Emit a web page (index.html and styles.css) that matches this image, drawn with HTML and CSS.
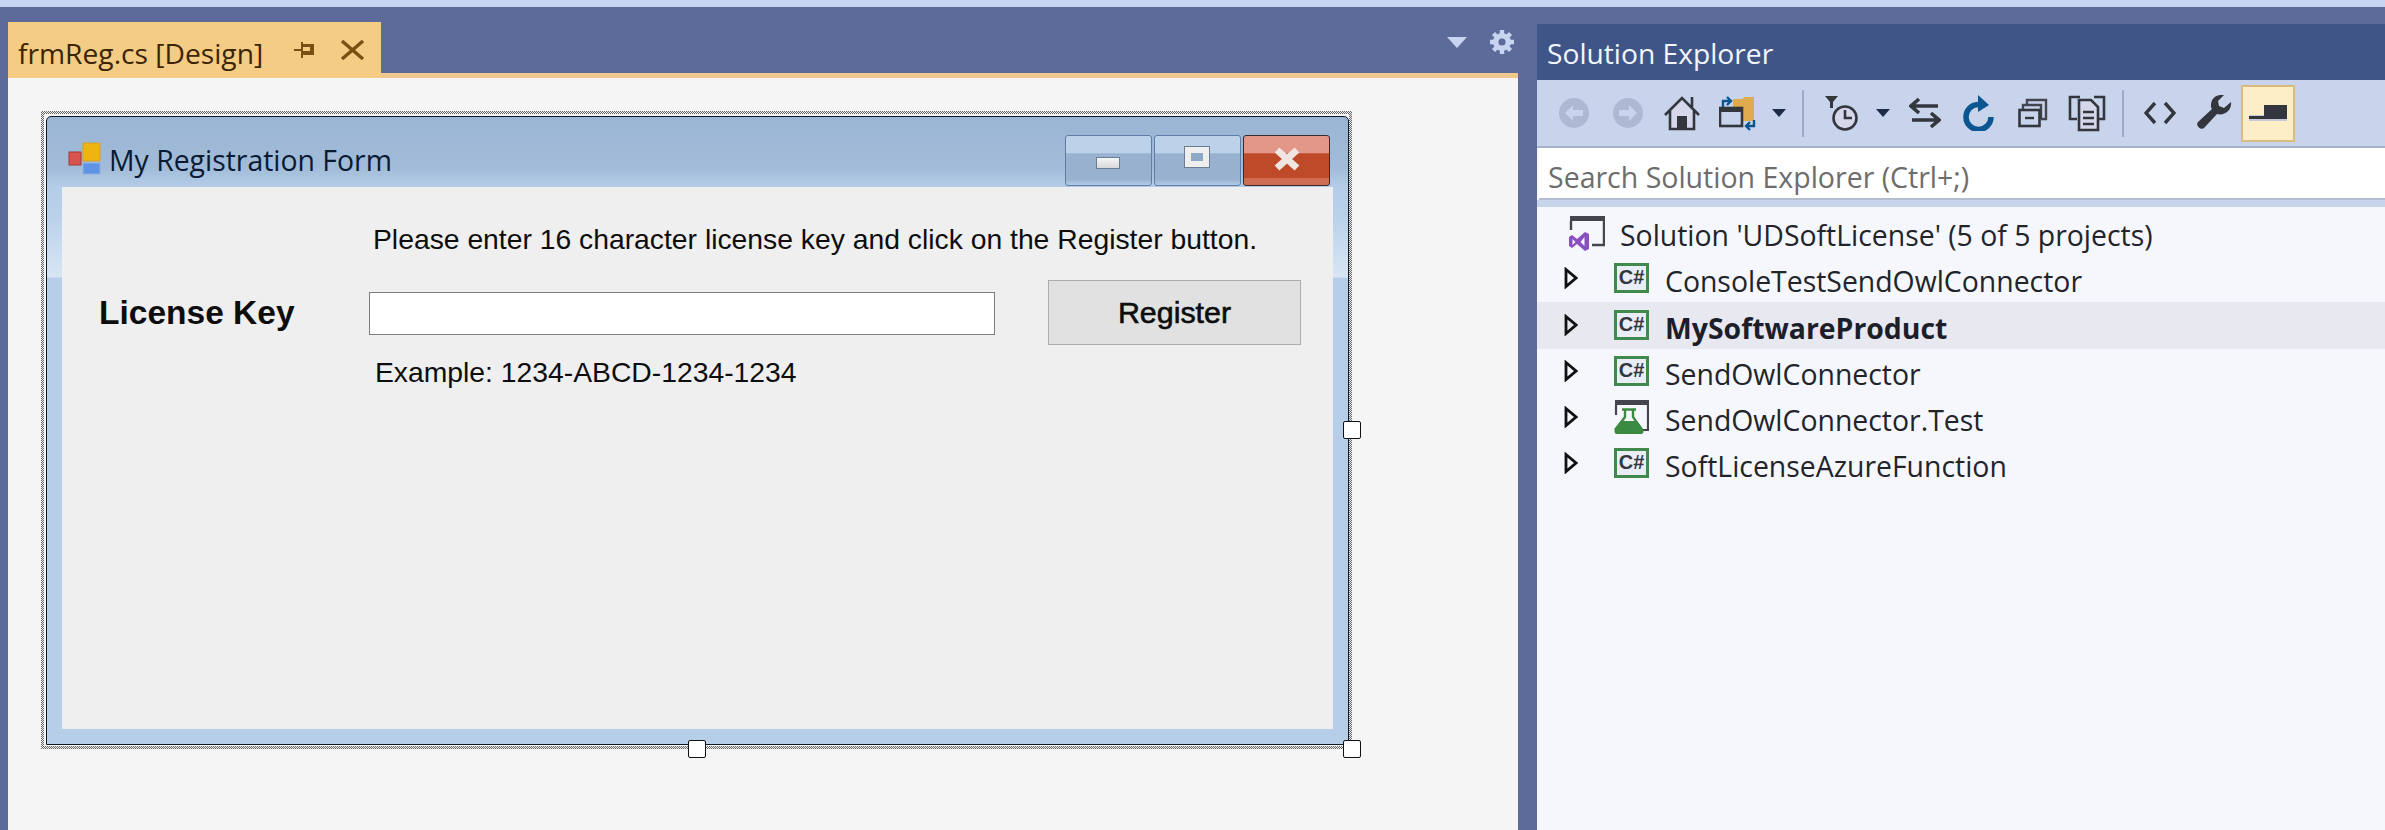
FILE: index.html
```html
<!DOCTYPE html>
<html lang="en">
<head>
<meta charset="utf-8">
<title>frmReg.cs [Design]</title>
<link rel="stylesheet" href="styles.css">
</head>
<body>
<div class="topbar"></div>
<div class="main">
  <section class="well">
    <div class="tabstrip">
      <div class="tab">
        <span class="tab-title">frmReg.cs [Design]</span>
        <svg class="tab-pin" width="20" height="18" viewBox="0 0 20 18"><path d="M0 9h8M8 1v16" stroke="#7a4f14" stroke-width="2" fill="none"/><rect x="9" y="3" width="11" height="11" fill="#7a4f14"/><rect x="9" y="6" width="7" height="4" fill="#f5cc84"/></svg>
        <svg class="tab-close" width="26" height="20" viewBox="0 0 26 20"><path d="M2 1l21 18M23 1L2 19" stroke="#7a4f14" stroke-width="3.4" fill="none"/></svg>
      </div>
      <div class="strip-tools">
        <svg width="20" height="11" viewBox="0 0 20 11"><path d="M0 0h20L10 11z" fill="#c8d4f0"/></svg>
        <svg class="gear" width="26" height="26" viewBox="0 0 26 26"><circle cx="13" cy="13" r="6.5" fill="none" stroke="#c8d4f0" stroke-width="5"/><path d="M13 1v24M1 13h24M4.5 4.5l17 17M21.5 4.5l-17 17" stroke="#c8d4f0" stroke-width="4.4"/><circle cx="13" cy="13" r="3.6" fill="#5c6b9a"/></svg>
      </div>
    </div>
    <div class="design">
      <div class="selection">
        <div class="form">
          <div class="titlebar">
            <svg class="app-icon" width="33" height="34" viewBox="0 0 33 34"><rect x="1" y="11" width="12" height="13" fill="#d8544e" stroke="#a33a36"/><rect x="15" y="2" width="17" height="18" fill="#edb412" stroke="#d2a22a"/><rect x="15" y="22" width="17" height="11" fill="#5f93e6" stroke="#8fb1e4"/></svg>
            <span class="form-title">My Registration Form</span>
            <div class="winbtns">
              <div class="winbtn"><span class="glyph-min"></span></div>
              <div class="winbtn"><span class="glyph-max"></span></div>
              <div class="winbtn winbtn-close"><svg width="28" height="24" viewBox="0 0 28 24"><path d="M4 3l20 18M24 3L4 21" stroke="#efe6e3" stroke-width="7" fill="none"/></svg></div>
            </div>
          </div>
          <div class="client">
            <p class="hint">Please enter 16 character license key and click on the Register button.</p>
            <div class="key-row">
              <label class="key-label">License Key</label>
              <div class="key-input"></div>
              <div class="reg-btn">Register</div>
            </div>
            <p class="example">Example: 1234-ABCD-1234-1234</p>
          </div>
        </div>
        <span class="handle handle-r"></span>
        <span class="handle handle-b"></span>
        <span class="handle handle-br"></span>
      </div>
    </div>
  </section>
  <aside class="explorer">
    <header class="se-title">Solution Explorer</header>
    <div class="toolbar">
      <span class="tb"><svg width="32" height="32" viewBox="0 0 32 32"><circle cx="16" cy="16" r="15" fill="#aeb8d2"/><path d="M15 8l-8 8 8 8v-5h10v-6H15z" fill="#c8d4ec"/></svg></span>
      <span class="tb"><svg width="32" height="32" viewBox="0 0 32 32"><circle cx="16" cy="16" r="15" fill="#aeb8d2"/><path d="M17 8l8 8-8 8v-5H7v-6h10z" fill="#c8d4ec"/></svg></span>
      <span class="tb"><svg width="36" height="36" viewBox="0 0 36 36"><path d="M6 17v17h24V17L18 5z" fill="#d5d8ea"/><path d="M6 16v18h24V16M1 20L18 3l17 17M28 12V2" fill="none" stroke="#33363d" stroke-width="2.6"/><rect x="13" y="21" width="10" height="13" fill="#33363d"/></svg></span>
      <span class="tb tb-sync"><svg width="38" height="36" viewBox="0 0 38 36"><path d="M14 4h9l3-2h9v24H22V12H14z" fill="#e0aa4e"/><rect x="1" y="13" width="22" height="18" fill="#c8d4ec" stroke="#33363d" stroke-width="2.6"/><rect x="1" y="13" width="22" height="4" fill="#33363d"/><path d="M4 12V6h7M8 2l4 4-4 4M35 25v6h-7M31 27l-4 4 4 4" fill="none" stroke="#0b5590" stroke-width="2.4"/></svg></span>
      <span class="caret"></span>
      <span class="tb-sep"></span>
      <span class="tb"><svg width="36" height="38" viewBox="0 0 36 38"><path d="M0 2h13L8 8v6H5V8z" fill="#33363d"/><circle cx="20" cy="24" r="11.5" fill="#d5d8ea" stroke="#33363d" stroke-width="2.6"/><path d="M20 16v8h7" fill="none" stroke="#33363d" stroke-width="2.6"/></svg></span>
      <span class="caret caret-b"></span>
      <span class="tb"><svg width="32" height="32" viewBox="0 0 32 32"><path d="M10 2L2 9l8 7M3 9h26M22 16l8 7-8 7M29 23H3" fill="none" stroke="#33363d" stroke-width="3.6"/></svg></span>
      <span class="tb"><svg width="32" height="36" viewBox="0 0 32 36"><path d="M15 9.500A12.500 12.500 0 1 0 28 22" fill="none" stroke="#0b5590" stroke-width="5.500"/><path d="M15 0l11 10-11 7z" fill="#0b5590"/></svg></span>
      <span class="tb"><svg width="30" height="30" viewBox="0 0 30 30"><path d="M9 7V2h19v19h-5M5 12V7h18v14" fill="none" stroke="#43464e" stroke-width="2.400"/><rect x="1.500" y="12" width="20" height="16" fill="#c8d4ec" stroke="#33363d" stroke-width="2.600"/><path d="M7 20h9" stroke="#33363d" stroke-width="2.400"/></svg></span>
      <span class="tb"><svg width="38" height="37" viewBox="0 0 38 37"><path d="M9 24H2V2h10M26 2h10v22h-5" fill="none" stroke="#33363d" stroke-width="2.600"/><path d="M11 5h12l7 7v23H11z" fill="#d5d8ea" stroke="#33363d" stroke-width="2.600"/><path d="M15 17h11M15 23h11M15 29h11" stroke="#33363d" stroke-width="2.400"/></svg></span>
      <span class="tb-sep tb-sep-b"></span>
      <span class="tb"><svg width="32" height="24" viewBox="0 0 32 24"><path d="M11 2L2 12l9 10M21 2l9 10-9 10" fill="none" stroke="#33363d" stroke-width="3.400"/></svg></span>
      <span class="tb"><svg width="36" height="36" viewBox="0 0 36 36"><path d="M35 7l-7 6-5-2-1-5 6-6c-7-1-13 3-13 10 0 2 0 3 1 4L2 27c-3 3 3 9 6 6l13-14c8 2 15-4 14-12z" fill="#33363d"/></svg></span>
      <span class="tb tb-active"><svg width="38" height="16" viewBox="0 0 38 16"><rect y="10" width="38" height="6" fill="#c5c9d8"/><rect x="0" y="11" width="16" height="3" fill="#33363d"/><rect x="15" y="0" width="23" height="14" fill="#33363d"/></svg></span>
    </div>
    <div class="search">Search Solution Explorer (Ctrl+;)</div>
    <div class="search-gap"></div>
    <ul class="tree">
      <li class="row row-solution">
        <svg class="sol-icon" width="36" height="36" viewBox="0 0 36 36"><rect x="1" y="1" width="35" height="5" fill="#43464e"/><path d="M2 6v9M35 6v24H23" fill="none" stroke="#43464e" stroke-width="2.400"/><path d="M0 22l3-2 5 4 8-7 4 2v15l-4 2-8-7-5 4-3-2z" fill="#8a4fc0"/><path d="M3.500 24v6l3-3zM15.500 22l-4 5 4 4z" fill="#f5f7fc"/></svg>
        <span class="label">Solution 'UDSoftLicense' (5 of 5 projects)</span>
      </li>
      <li class="row"><svg class="expander" width="14" height="22" viewBox="0 0 14 22"><path d="M2 2.500L12 11 2 19.500z" fill="none" stroke="#111" stroke-width="2.800"/></svg><span class="cs">C#</span><span class="label">ConsoleTestSendOwlConnector</span></li>
      <li class="row row-selected"><svg class="expander" width="14" height="22" viewBox="0 0 14 22"><path d="M2 2.500L12 11 2 19.500z" fill="none" stroke="#111" stroke-width="2.800"/></svg><span class="cs">C#</span><span class="label">MySoftwareProduct</span></li>
      <li class="row"><svg class="expander" width="14" height="22" viewBox="0 0 14 22"><path d="M2 2.500L12 11 2 19.500z" fill="none" stroke="#111" stroke-width="2.800"/></svg><span class="cs">C#</span><span class="label">SendOwlConnector</span></li>
      <li class="row"><svg class="expander" width="14" height="22" viewBox="0 0 14 22"><path d="M2 2.500L12 11 2 19.500z" fill="none" stroke="#111" stroke-width="2.800"/></svg>
        <svg class="flask" width="35" height="34" viewBox="0 0 35 34"><rect x="1" y="0" width="34" height="5" fill="#43464e"/><path d="M2 5v10M34 5v25H26" fill="none" stroke="#43464e" stroke-width="2.200"/><path d="M8 9.500h14M11 9.500V17L1 30M19 9.500V17L28 30" fill="none" stroke="#3b8a42" stroke-width="2.400"/><path d="M7 21h16l6 8q2 5-3 5H4q-5 0-3-5z" fill="#3b8a42"/></svg>
        <span class="label">SendOwlConnector.Test</span></li>
      <li class="row"><svg class="expander" width="14" height="22" viewBox="0 0 14 22"><path d="M2 2.500L12 11 2 19.500z" fill="none" stroke="#111" stroke-width="2.800"/></svg><span class="cs">C#</span><span class="label">SoftLicenseAzureFunction</span></li>
    </ul>
  </aside>
</div>
</body>
</html>
```
FILE: styles.css
```css
* { box-sizing: border-box; }
html, body { margin: 0; padding: 0; }
body {
  width: 2385px;
  height: 830px;
  overflow: hidden;
  background: #5c6b9a;
  font-family: "Open Sans", "Noto Sans", sans-serif;
}
.topbar { height: 7px; background: #c8d4f0; }
.main { display: flex; height: 823px; }

/* Document well */
.well { width: 1537px; padding: 15px 19px 0 8px; display: flex; flex-direction: column; }
.tabstrip {
  height: 56px;
  flex: none;
  display: flex;
  justify-content: space-between;
  border-bottom: 5px solid #efc88e;
}
.tab {
  width: 373px;
  height: 56px;
  background: #f5cc84;
  display: flex;
  align-items: center;
  padding-left: 10px;
  color: #3b2505;
}
.tab-title { font-size: 28.2px; width: 276px; white-space: nowrap; padding-top: 6px; }
.tab-pin { margin-right: 26px; }
.strip-tools { display: flex; align-items: center; gap: 22px; height: 44px; padding-right: 3px; margin-top: -2px; }
.design { flex: 1; background: #f5f5f5; padding: 33px 0 0 33px; }

/* Form under design */
.selection {
  position: relative;
  width: 1311px;
  height: 638px;
  padding: 2px 0 1px 2px;
  border: 3px solid transparent;
  background:
    linear-gradient(#f5f5f5, #f5f5f5) padding-box,
    repeating-conic-gradient(#666 0 25%, #eee 0 50%) 0 0 / 2px 2px border-box;
}
.form {
  height: 100%;
  display: flex;
  flex-direction: column;
  padding: 0 15px 15px 15px;
  border: 1.5px solid #0c1a24;
  border-radius: 5px 5px 0 0;
  background: linear-gradient(to bottom, #9ab5d4 0, #a1bbd8 50px, #b5cde8 71px, #bad1ea 100px, #d8e6f4 160px, #b6cee8 161px);
}
.titlebar { height: 70px; flex: none; display: flex; align-items: center; padding: 0 3px 0 6px; }
.app-icon { flex: none; margin-top: 12px; }
.form-title { margin-left: 8px; font-size: 28.4px; color: #0a1a33; margin-top: 16px; white-space: nowrap; }
.winbtns { margin-left: auto; display: flex; gap: 2px; margin-top: 16px; }
.winbtn {
  width: 87px;
  height: 51px;
  border: 1px solid #5f7ea6;
  border-radius: 3px;
  background: linear-gradient(to bottom, #bcd2e9 0, #bcd2e9 35%, #98b1cf 36%, #98b1cf 88%, #b2cbe4 100%);
  display: flex;
  align-items: center;
  justify-content: center;
}
.winbtn-close {
  border-color: #3a2a2e;
  background: linear-gradient(to bottom, #e39788 0, #e39788 35%, #bf4a2a 36%, #bf4a2a 85%, #cf6d55 86%, #cf6d55 100%);
}
.winbtn-close svg { margin-top: -3px; }
.glyph-min { width: 24px; height: 12px; margin-top: 6px; margin-left: -2px; border: 1px solid #6b7d95; background: linear-gradient(#f6f6f6, #d8d8d8); }
.glyph-max { width: 24px; height: 20px; margin-top: -6px; margin-left: -2px; border: 6px solid #eee; outline: 1px solid #6b7d95; background: #8fa8c6; }
.client {
  flex: 1;
  background: #efefef;
  color: #0d0d0d;
  font-family: "Liberation Sans", Arial, sans-serif;
  font-size: 28.3px;
}
.hint { margin: 35px 0 0 311px; white-space: nowrap; line-height: 34px; }
.key-row { display: flex; align-items: center; margin-top: 24px; }
.key-label { width: 307px; padding-left: 37px; font-weight: 700; font-size: 33.500px; white-space: nowrap; }
.key-input { width: 626px; height: 43px; margin-top: 2px; background: #fff; border: 1px solid #7d7d7d; }
.reg-btn {
  width: 253px;
  height: 65px;
  margin-left: 53px;
  background: #e1e1e1;
  border: 1.5px solid #adadad;
  display: flex;
  align-items: center;
  justify-content: center;
  font-size: 30.4px;
  -webkit-text-stroke: 0.6px #0d0d0d;
}
.example { margin: 10px 0 0 313px; line-height: 34px; white-space: nowrap; }
.handle {
  position: absolute;
  width: 18px;
  height: 18px;
  background: #fff;
  border: 1.5px solid #111;
  border-radius: 2px;
}
.handle-r { left: 1299px; top: 307px; }
.handle-b { left: 644px; top: 626px; }
.handle-br { left: 1299px; top: 626px; }

/* Solution Explorer */
.explorer { flex: 1; margin-top: 17px; display: flex; flex-direction: column; background: #f5f7fc; }
.se-title {
  height: 56px;
  flex: none;
  background: #3f5588;
  color: #f2f5fb;
  font-size: 28.2px;
  line-height: 59px;
  padding-left: 10px;
}
.toolbar {
  height: 68px;
  flex: none;
  display: flex;
  align-items: center;
  background: #c8d4ec;
  border-bottom: 2px solid #a9b2c6;
  padding-left: 10px;
}
.tb { width: 54px; height: 100%; flex: none; display: flex; align-items: center; justify-content: center; }
.tb-sync { margin-left: 2px; }
.caret { width: 28px; flex: none; display: flex; justify-content: center; }
.caret::before { content: ""; border-style: solid; border-width: 8px 7.5px 0; border-color: #1d2a4a transparent transparent; }
.caret-b { margin-right: 2px; width: 26px; }
.tb-sep { width: 2px; height: 47px; flex: none; background: #9fabc6; margin: 0 12px 0 9px; }
.tb-sep-b { margin: 0 9px 0 8px; }
.tb-active {
  height: 57px;
  background: #fdeec8;
  border: 2px solid #d9bb80;
}
.search {
  height: 52px;
  flex: none;
  background: #fff;
  border-bottom: 2px solid #b5bdd0;
  margin-left: 2px;
  color: #6d6d6d;
  font-size: 28.5px;
  line-height: 58px;
  padding-left: 9px;
  white-space: nowrap;
}
.search-gap { height: 7px; flex: none; background: #c8d4ec; }
.tree { list-style: none; margin: 3px 0 0; padding: 0; color: #22242a; font-size: 28.4px; }
.row { height: 46px; display: flex; align-items: center; padding-left: 27px; white-space: nowrap; }
.row-solution { padding-left: 32px; }
.row-selected { background: #e7e8f0; font-weight: 700; color: #1c1e2a; height: 47px; }
.label { padding-top: 4px; }
.expander { flex: none; margin-right: 36px; margin-top: -2px; }
.cs {
  flex: none;
  width: 35px;
  height: 30px;
  margin-right: 16px;
  margin-top: -2px;
  border: 3px solid #3f8a4c;
  background: #e9edf6;
  color: #33363d;
  font-family: "Liberation Sans", Arial, sans-serif;
  font-weight: 700;
  font-size: 20px;
  line-height: 23px;
  text-align: center;
  overflow: hidden;
}
.sol-icon { flex: none; margin-right: 15px; }
.flask { flex: none; margin-right: 16px; margin-top: -2px; }
```
